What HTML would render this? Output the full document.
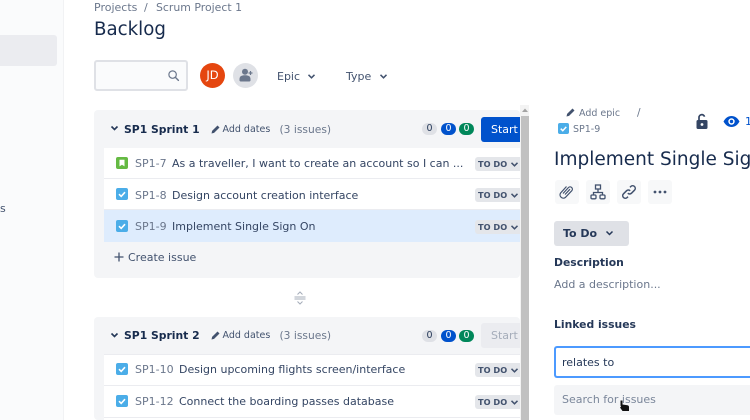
<!DOCTYPE html>
<html><head><meta charset="utf-8">
<style>
html,body{margin:0;padding:0;width:750px;height:420px;overflow:hidden;background:#fff}
body{font-family:"DejaVu Sans","Liberation Sans",sans-serif;color:#253858;position:relative}
#w{position:absolute;left:0;top:0;width:750px;height:420px;overflow:hidden;filter:blur(.35px)}
.a{position:absolute;white-space:nowrap}
.sprint{left:94px;width:426px;background:#f4f5f7;border-radius:4px}
.row{position:absolute;left:104px;width:416px;height:31px;background:#fff;border-bottom:1px solid #ebecf0;box-sizing:border-box}
.t{font-size:11px;line-height:14px}
.id{color:#6b778c}
.sum{color:#344563}
.lz{position:absolute;left:475px;width:45px;height:14px;background:#e4e6ea;border-radius:3px 0 0 3px;font-size:8.2px;font-weight:bold;color:#42526e;line-height:14px;padding-left:3px;box-sizing:border-box;white-space:nowrap}
.lz svg{position:absolute;left:35px;top:4px}
.badge{position:absolute;height:12px;width:15px;border-radius:7px;font-size:9.5px;line-height:12px;text-align:center}
.b0{background:#dfe1e6;color:#253858}.b1{background:#0052cc;color:#fff}.b2{background:#00875a;color:#fff}
.ib{position:absolute;width:24px;height:24px;background:#f7f8f9;border-radius:3px}
</style></head><body><div id="w">
<!-- sidebar -->
<div class="a" style="left:0;top:0;width:63px;height:420px;background:#fafbfc;border-right:1px solid #f1f2f4"></div>
<div class="a" style="left:0;top:35px;width:57px;height:31px;background:#ebecf0;border-radius:0 3px 3px 0"></div>
<div class="a" style="left:0;top:202px;font-size:11px;line-height:14px;color:#42526e">s</div>

<!-- header -->
<div class="a" style="left:94px;top:1px;font-size:11px;line-height:14px;color:#6b778c">Projects</div>
<div class="a" style="left:144px;top:1px;font-size:11px;line-height:14px;color:#6b778c">/</div>
<div class="a" style="left:156px;top:1px;font-size:10.9px;line-height:14px;color:#6b778c">Scrum Project 1</div>
<div class="a" style="left:94px;top:18px;font-size:18.2px;line-height:24px;color:#172b4d">Backlog</div>

<!-- toolbar -->
<div class="a" style="left:94px;top:60px;width:94px;height:31px;box-sizing:border-box;border:2px solid #dfe1e6;border-radius:3px;background:#fafbfc"></div>
<svg class="a" style="left:167px;top:69px" width="13" height="13" viewBox="0 0 13 13"><circle cx="5.6" cy="5.6" r="3.7" fill="none" stroke="#6b778c" stroke-width="1.2"/><path d="M8.4 8.4l3 3" stroke="#6b778c" stroke-width="1.4" stroke-linecap="round"/></svg>
<div class="a" style="left:200px;top:63px;width:25px;height:25px;border-radius:50%;background:#e5460f;color:#fff;font-size:11.5px;line-height:25px;text-align:center">JD</div>
<div class="a" style="left:233px;top:63px;width:25px;height:25px;border-radius:50%;background:#dfe1e6"></div>
<svg class="a" style="left:238px;top:68px" width="16" height="15" viewBox="0 0 16 15"><circle cx="7" cy="3.8" r="3" fill="#6b778c"/><path d="M1.500 11c0-2.500 2-3.700 5.500-3.700s5.500 1.200 5.500 3.700v1.300c0 .7-.5 1.200-1.200 1.200H2.700c-.7 0-1.200-.5-1.200-1.200z" fill="#6b778c"/><path d="M12.500 3v4M10.500 5h4" stroke="#6b778c" stroke-width="1.200"/></svg>
<div class="a t" style="left:277px;top:70px;color:#42526e">Epic</div>
<svg class="a" style="left:307px;top:73px" width="9" height="7" viewBox="0 0 9 7"><path d="M1.500 1.800L4.500 4.800L7.500 1.800" fill="none" stroke="#42526e" stroke-width="1.500"/></svg>
<div class="a t" style="left:346px;top:70px;color:#42526e">Type</div>
<svg class="a" style="left:379px;top:73px" width="9" height="7" viewBox="0 0 9 7"><path d="M1.500 1.800L4.500 4.800L7.500 1.800" fill="none" stroke="#42526e" stroke-width="1.500"/></svg>

<!-- sprint 1 -->
<div class="a sprint" style="top:110px;height:168px"></div>
<svg class="a" style="left:110px;top:125px" width="9" height="7" viewBox="0 0 9 7"><path d="M1.500 1.500L4.500 4.500L7.500 1.500" fill="none" stroke="#253858" stroke-width="1.600"/></svg>
<div class="a" style="left:124px;top:123px;font-size:10.8px;font-weight:bold;line-height:14px;color:#172b4d">SP1 Sprint 1</div>
<svg class="a" style="left:210px;top:124px" width="11" height="11" viewBox="0 0 11 11"><path d="M1.500 9.500l.6-2.600L7.500 1.500l2 2L4.100 8.900z" fill="#42526e"/></svg>
<div class="a" style="left:222.500px;top:123px;font-size:9.500px;line-height:14px;color:#42526e">Add dates</div>
<div class="a" style="left:279.500px;top:123px;font-size:10.700px;line-height:14px;color:#6b778c">(3 issues)</div>
<div class="badge b0" style="left:422px;top:123px">0</div>
<div class="badge b1" style="left:441px;top:123px">0</div>
<div class="badge b2" style="left:459px;top:123px">0</div>
<div class="a" style="left:481px;top:117px;width:39px;height:25px;background:#0052cc;border-radius:3px 0 0 3px;color:#fff;font-size:11px;line-height:25px;padding-left:10px;box-sizing:border-box;overflow:hidden">Start</div>

<div class="row" style="top:148px"></div>
<div class="row" style="top:179px"></div>
<div class="row" style="top:210px;background:#deecfd;border:none;height:32px"></div>

<svg class="a" style="left:116px;top:157px" width="12" height="12" viewBox="0 0 12 12"><rect width="12" height="12" rx="2" fill="#65ba43"/><path d="M3.500 2.800h5v6.600L6 7.700 3.500 9.400z" fill="#fff"/></svg>
<div class="a t id" style="left:135px;top:157px">SP1-7</div>
<div class="a t sum" style="left:172px;top:157px">As a traveller, I want to create an account so I can ...</div>
<div class="lz" style="top:157px">TO DO<svg width="9" height="7" viewBox="0 0 9 7"><path d="M1.500 1.800L4.500 4.800L7.500 1.800" fill="none" stroke="#42526e" stroke-width="1.500"/></svg></div>

<svg class="a" style="left:116px;top:188px" width="12" height="12" viewBox="0 0 12 12"><rect width="12" height="12" rx="2" fill="#4bade8"/><path d="M3 6.200l2.200 2.200L9 4.200" fill="none" stroke="#fff" stroke-width="1.600"/></svg>
<div class="a t id" style="left:135px;top:189px">SP1-8</div>
<div class="a t sum" style="left:172px;top:189px">Design account creation interface</div>
<div class="lz" style="top:188px">TO DO<svg width="9" height="7" viewBox="0 0 9 7"><path d="M1.500 1.800L4.500 4.800L7.500 1.800" fill="none" stroke="#42526e" stroke-width="1.500"/></svg></div>

<svg class="a" style="left:116px;top:220px" width="12" height="12" viewBox="0 0 12 12"><rect width="12" height="12" rx="2" fill="#4bade8"/><path d="M3 6.200l2.200 2.200L9 4.200" fill="none" stroke="#fff" stroke-width="1.600"/></svg>
<div class="a t id" style="left:135px;top:220px">SP1-9</div>
<div class="a t sum" style="left:172px;top:220px">Implement Single Sign On</div>
<div class="lz" style="top:220px">TO DO<svg width="9" height="7" viewBox="0 0 9 7"><path d="M1.500 1.800L4.500 4.800L7.500 1.800" fill="none" stroke="#42526e" stroke-width="1.500"/></svg></div>

<svg class="a" style="left:113px;top:251px" width="12" height="12" viewBox="0 0 12 12"><path d="M6 1.500v9M1.500 6h9" stroke="#42526e" stroke-width="1.300"/></svg>
<div class="a t" style="left:128px;top:251px;color:#42526e">Create issue</div>

<!-- divider -->
<svg class="a" style="left:294px;top:291px" width="12" height="14" viewBox="0 0 12 14"><path d="M3.500 3.500L6 1l2.500 2.500M3.500 10.500L6 13l2.500-2.500" fill="none" stroke="#a5adba" stroke-width="1"/><path d="M.5 6h11M.5 8h11" stroke="#a5adba" stroke-width="1"/></svg>

<!-- sprint 2 -->
<div class="a sprint" style="top:317px;height:103px"></div>
<svg class="a" style="left:110px;top:332px" width="9" height="7" viewBox="0 0 9 7"><path d="M1.500 1.500L4.500 4.500L7.500 1.500" fill="none" stroke="#253858" stroke-width="1.600"/></svg>
<div class="a" style="left:124px;top:329px;font-size:10.8px;font-weight:bold;line-height:14px;color:#172b4d">SP1 Sprint 2</div>
<svg class="a" style="left:210px;top:330px" width="11" height="11" viewBox="0 0 11 11"><path d="M1.500 9.500l.6-2.600L7.500 1.500l2 2L4.100 8.900z" fill="#42526e"/></svg>
<div class="a" style="left:222.500px;top:329px;font-size:9.500px;line-height:14px;color:#42526e">Add dates</div>
<div class="a" style="left:279.500px;top:329px;font-size:10.700px;line-height:14px;color:#6b778c">(3 issues)</div>
<div class="badge b0" style="left:422px;top:330px">0</div>
<div class="badge b1" style="left:441px;top:330px">0</div>
<div class="badge b2" style="left:459px;top:330px">0</div>
<div class="a" style="left:481px;top:323px;width:39px;height:25px;background:#ebecf0;border-radius:3px 0 0 3px;color:#a5adba;font-size:11px;line-height:25px;padding-left:10px;box-sizing:border-box;overflow:hidden">Start</div>

<div class="row" style="top:354px;border-top:1px solid #ebecf0;height:32px"></div>
<div class="row" style="top:386px;height:32px"></div>
<div class="row" style="top:418px;height:2px;border:none"></div>

<svg class="a" style="left:116px;top:363px" width="12" height="12" viewBox="0 0 12 12"><rect width="12" height="12" rx="2" fill="#4bade8"/><path d="M3 6.200l2.200 2.200L9 4.200" fill="none" stroke="#fff" stroke-width="1.600"/></svg>
<div class="a t id" style="left:135px;top:363px">SP1-10</div>
<div class="a t sum" style="left:179px;top:363px">Design upcoming flights screen/interface</div>
<div class="lz" style="top:363px">TO DO<svg width="9" height="7" viewBox="0 0 9 7"><path d="M1.500 1.800L4.500 4.800L7.500 1.800" fill="none" stroke="#42526e" stroke-width="1.500"/></svg></div>

<svg class="a" style="left:116px;top:395px" width="12" height="12" viewBox="0 0 12 12"><rect width="12" height="12" rx="2" fill="#4bade8"/><path d="M3 6.200l2.200 2.200L9 4.200" fill="none" stroke="#fff" stroke-width="1.600"/></svg>
<div class="a t id" style="left:135px;top:395px">SP1-12</div>
<div class="a t sum" style="left:179px;top:395px">Connect the boarding passes database</div>
<div class="lz" style="top:395px">TO DO<svg width="9" height="7" viewBox="0 0 9 7"><path d="M1.500 1.800L4.500 4.800L7.500 1.800" fill="none" stroke="#42526e" stroke-width="1.500"/></svg></div>

<!-- scrollbar -->
<div class="a" style="left:520px;top:105px;width:9px;height:315px;background:#f3f3f3"></div>
<div class="a" style="left:521px;top:116px;width:8px;height:304px;background:#c1c1c1"></div>
<svg class="a" style="left:521px;top:107px" width="8" height="6" viewBox="0 0 8 6"><path d="M1 5L4 1.500L7 5z" fill="#a3a3a3"/></svg>

<!-- right panel -->
<svg class="a" style="left:565px;top:107px" width="11" height="11" viewBox="0 0 11 11"><path d="M1.500 9.500l.6-2.600L7.500 1.500l2 2L4.100 8.900z" fill="#42526e"/></svg>
<div class="a" style="left:579px;top:107px;font-size:9.500px;line-height:14px;color:#6b778c">Add epic</div>
<div class="a" style="left:637px;top:106px;font-size:10.500px;line-height:14px;color:#6b778c">/</div>
<svg class="a" style="left:558px;top:123px" width="11" height="11" viewBox="0 0 12 12"><rect width="12" height="12" rx="2" fill="#4bade8"/><path d="M3 6.200l2.200 2.200L9 4.200" fill="none" stroke="#fff" stroke-width="1.600"/></svg>
<div class="a" style="left:573px;top:123px;font-size:9.500px;line-height:14px;color:#6b778c">SP1-9</div>
<svg class="a" style="left:695px;top:113px" width="14" height="17" viewBox="0 0 14 17"><path d="M4 7V4.500a2.800 2.800 0 0 1 5.500-.8" fill="none" stroke="#344563" stroke-width="1.700"/><rect x="1.500" y="7" width="11" height="9" rx="1.500" fill="#344563"/><circle cx="7" cy="11.500" r="1.400" fill="#fff"/></svg>
<svg class="a" style="left:723px;top:115px" width="17" height="13" viewBox="0 0 17 13"><path d="M.5 6.500C2.500 2.800 5.200 1 8.500 1s6 1.800 8 5.500c-2 3.700-4.700 5.500-8 5.500s-6-1.800-8-5.500z" fill="#0052cc"/><circle cx="8.500" cy="6.500" r="3.200" fill="#fff"/><circle cx="8.500" cy="6.500" r="1.700" fill="#0052cc"/></svg>
<div class="a" style="left:745px;top:115px;width:5px;overflow:hidden;font-size:11px;line-height:14px;color:#0052cc">1</div>

<div class="a" style="left:554px;top:148px;width:196px;overflow:hidden;font-size:18.500px;line-height:24px;color:#172b4d">Implement Single Sign On</div>

<div class="ib" style="left:555px;top:180px"></div>
<div class="ib" style="left:586px;top:180px"></div>
<div class="ib" style="left:617px;top:180px"></div>
<div class="ib" style="left:648px;top:180px"></div>
<svg class="a" style="left:559px;top:184px" width="16" height="16" viewBox="0 0 16 16"><path d="M4 9.500l5.500-6a2.300 2.300 0 0 1 3.300 3.200l-6.500 6.800a3.300 3.300 0 0 1-4.700-4.500L7.500 2.500M6 10.500l5-5.300" fill="none" stroke="#42526e" stroke-width="1.200"/></svg>
<svg class="a" style="left:590px;top:184px" width="16" height="16" viewBox="0 0 16 16"><rect x="5.500" y="1" width="5" height="4" fill="none" stroke="#42526e" stroke-width="1.300"/><rect x="1" y="11" width="5" height="3.800" rx="1" fill="none" stroke="#42526e" stroke-width="1.300"/><rect x="10" y="11" width="5" height="3.800" rx="1" fill="none" stroke="#42526e" stroke-width="1.300"/><path d="M8 5v3.500M3.500 11V8.500h9V11" fill="none" stroke="#42526e" stroke-width="1.300"/></svg>
<svg class="a" style="left:621px;top:184px" width="16" height="16" viewBox="0 0 16 16"><path d="M6.800 9.200a2.600 2.600 0 0 0 3.700 0l3-3a2.600 2.600 0 0 0-3.700-3.700L9 3.300M9.200 6.800a2.600 2.600 0 0 0-3.700 0l-3 3a2.600 2.600 0 0 0 3.700 3.700l.8-.8" fill="none" stroke="#42526e" stroke-width="1.500"/></svg>
<svg class="a" style="left:652px;top:184px" width="16" height="16" viewBox="0 0 16 16"><circle cx="3" cy="8" r="1.400" fill="#42526e"/><circle cx="8" cy="8" r="1.400" fill="#42526e"/><circle cx="13" cy="8" r="1.400" fill="#42526e"/></svg>

<div class="a" style="left:554px;top:221px;width:75px;height:25px;background:#dfe1e6;border-radius:3px"></div>
<div class="a" style="left:563px;top:227px;font-size:11px;font-weight:bold;line-height:14px;color:#253858">To Do</div>
<svg class="a" style="left:605px;top:230px" width="9" height="7" viewBox="0 0 9 7"><path d="M1.500 1.500L4.500 4.500L7.500 1.500" fill="none" stroke="#253858" stroke-width="1.500"/></svg>

<div class="a" style="left:554px;top:256px;font-size:10.800px;font-weight:bold;line-height:14px;color:#253858">Description</div>
<div class="a t" style="left:554px;top:278px;color:#6b778c">Add a description...</div>
<div class="a" style="left:554px;top:318px;font-size:10.800px;font-weight:bold;line-height:14px;color:#253858">Linked issues</div>

<div class="a" style="left:554px;top:346px;width:196px;height:32px;box-sizing:border-box;border:2px solid #4c9aff;border-right:none;border-radius:3px 0 0 3px;background:#fff"></div>
<div class="a t" style="left:562px;top:356px;color:#253858">relates to</div>
<div class="a" style="left:554px;top:385px;width:196px;height:30px;background:#f4f5f7;border-radius:3px 0 0 3px"></div>
<div class="a t" style="left:562px;top:393px;color:#7a869a">Search for issues</div>
<svg class="a" style="left:618px;top:399px" width="13" height="13" viewBox="0 0 13 13"><path d="M2.500 1.500h2v4l5 .8c1 .2 1.500.8 1.500 1.700V12H4.500L2 8.500l1-.8-.5-1.200z" fill="#111"/></svg>
</div></body></html>
